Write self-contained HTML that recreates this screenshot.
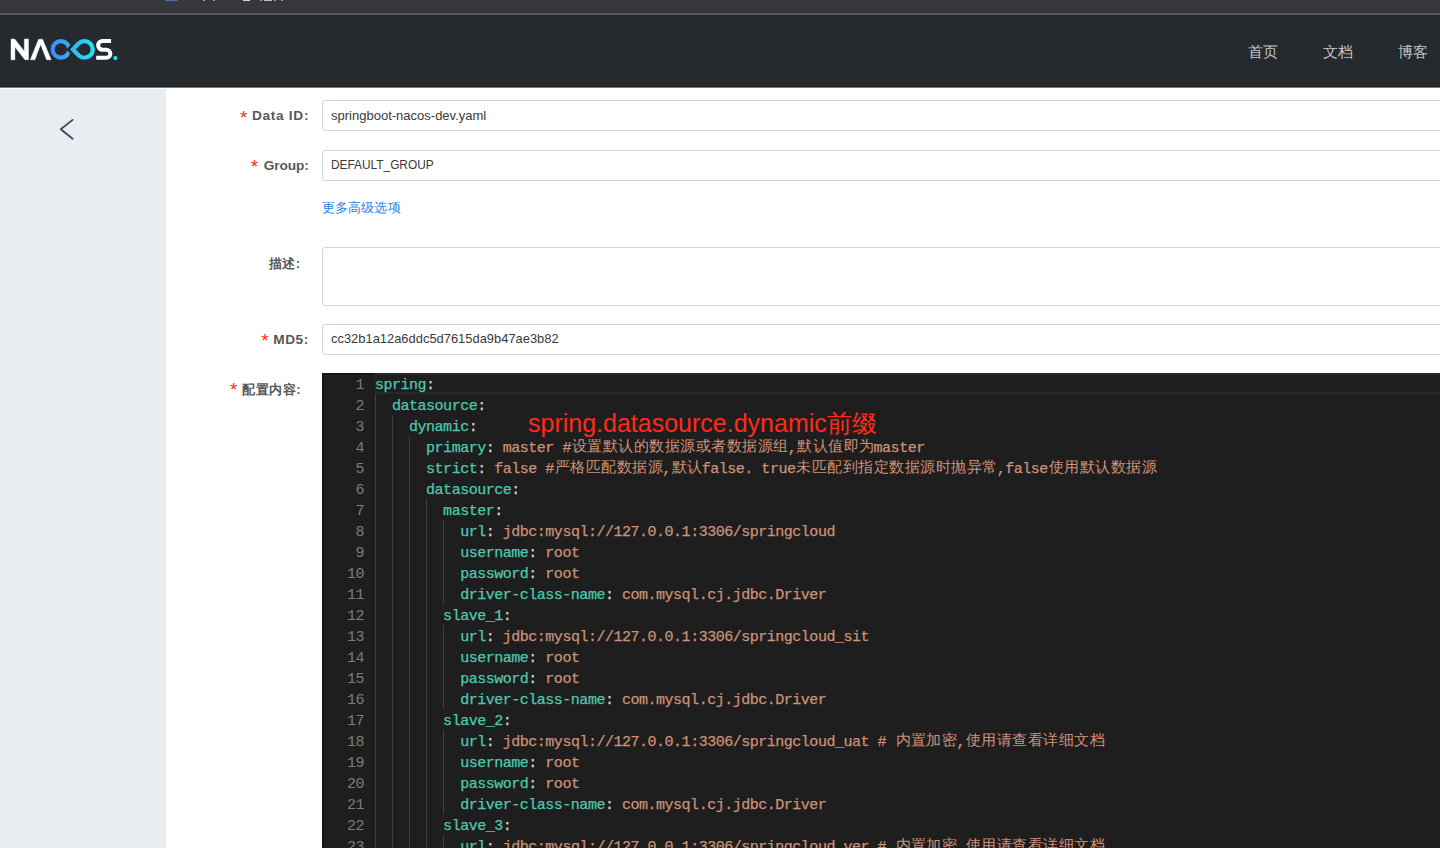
<!DOCTYPE html>
<html><head><meta charset="utf-8">
<style>
*{box-sizing:border-box}
html,body{margin:0;padding:0;width:1440px;height:848px;overflow:hidden;background:#fff;font-family:"Liberation Sans",sans-serif}
.a{position:absolute}
#top{left:0;top:0;width:1440px;height:13px;background:#37383c}
#topl1{left:0;top:12px;width:1440px;height:1px;background:#303135}
#topl2{left:0;top:13px;width:1440px;height:2px;background:#5b5c60}
#nav{left:0;top:15px;width:1440px;height:73px;background:#252a2e}
#navl0{left:0;top:15px;width:1440px;height:1px;background:#1f2229}
#navl1{left:0;top:86px;width:1440px;height:1px;background:#1b1f22}
#navl2{left:0;top:87px;width:1440px;height:1px;background:#777a7d}
#side{left:0;top:89px;width:166px;height:759px;background:#e9ecf1}
.nv{top:42px;font-size:15.4px;color:#c4c4c4;line-height:20px;white-space:nowrap}
.lbl{font-weight:bold;font-size:13.2px;color:#595959;text-align:right;white-space:nowrap;line-height:16px}
.star{color:#ff3000;font-size:19px;line-height:16px}
.inp{left:322px;width:1200px;height:31px;border:1px solid #d5d6de;border-radius:3px;background:#fff}
.itx{font-size:13.6px;color:#3a3a3a;white-space:nowrap;line-height:16px}

#ed{overflow:hidden;box-shadow:inset 2px 2px 0 #151515}
#ed .ln{position:absolute;left:0;width:42px;text-align:right;font-family:"Liberation Mono",monospace;font-size:15px;letter-spacing:-0.51px;line-height:21px;margin-top:2px;color:#7c7c7c;white-space:pre}
#ed .cl{position:absolute;font-family:"Liberation Mono",monospace;font-size:15px;letter-spacing:-0.485px;line-height:21px;margin-top:2px;color:#d4d4d4;white-space:pre;-webkit-text-stroke:0.25px}
#ed .k{color:#4ec9b0}
#ed .p{color:#d4d4d4}
#ed .v{color:#ce9178}
#ed i{font-style:normal;line-height:1px;font-family:"Liberation Sans",sans-serif;font-size:15.4px;letter-spacing:0.48px;-webkit-text-stroke:0;position:relative;left:1px;top:-0.8px}
#ed .g{position:absolute;width:1px;height:21px;background:#404040}
#ed .cur{position:absolute;left:53px;top:0;width:1100px;height:21px;border:2px solid #282828;border-right:none}
</style></head><body>
<div class="a" id="top"></div>
<div class="a" id="topl1"></div>
<div class="a" id="topl2"></div>
<div class="a" style="left:165px;top:0;width:13px;height:1px;background:#4a6da8"></div>
<div class="a" style="left:203px;top:0;width:2px;height:1px;background:#b09aa0"></div>
<div class="a" style="left:213px;top:0;width:2px;height:1px;background:#a09a70"></div>
<div class="a" style="left:243px;top:0;width:7px;height:1px;background:#d0d2e0"></div>
<div class="a" style="left:260px;top:0;width:2px;height:1px;background:#9a8a9a"></div>
<div class="a" style="left:264px;top:0;width:8px;height:1px;background:#b8bcc8"></div>
<div class="a" style="left:274px;top:0;width:2px;height:1px;background:#a0a0a0"></div>
<div class="a" style="left:281px;top:0;width:2px;height:1px;background:#a0a0a0"></div>
<div class="a" id="nav"></div>
<div class="a" id="navl0"></div>
<div class="a" id="navl1"></div>
<div class="a" id="navl2"></div>
<div class="a" id="side"></div>

<!-- logo -->
<svg class="a" style="left:0;top:0" width="130" height="70" viewBox="0 0 130 70">
<defs>
<linearGradient id="lg" x1="50" y1="0" x2="95" y2="0" gradientUnits="userSpaceOnUse"><stop offset="0" stop-color="#3d88f8"/><stop offset="0.45" stop-color="#34b4f6"/><stop offset="1" stop-color="#1de9f9"/></linearGradient>
<clipPath id="cc"><polygon points="40,20 95.5,20 66.1,49.4 95.5,78.8 40,78.8"/></clipPath>
</defs>
<polygon points="11,39 14.7,39 24.3,51.2 24.3,39 28.5,39 28.5,59.8 25,59.8 14.9,47 14.9,59.8 11,59.8" fill="#fff" stroke="#fff" stroke-width="0.4" stroke-linejoin="round"/>
<polygon points="30.3,59.8 38.6,39.2 42.6,39.2 51.2,59.8 46.6,59.8 40.6,44.4 34.9,59.8" fill="#fff" stroke="#fff" stroke-width="0.4" stroke-linejoin="round"/>
<circle cx="60.9" cy="49.4" r="8.3" fill="none" stroke="url(#lg)" stroke-width="4.2" clip-path="url(#cc)"/>
<path d="M78.5,43.5 A8.35,8.35 0 1 1 78.5,55.3 L72.85,49.4 Z" fill="none" stroke="url(#lg)" stroke-width="4.2" stroke-linejoin="miter"/>
<path d="M111.1,40.95 H102.55 A4.4,4.4 0 0 0 102.55,49.75 H106.3 A4.05,4.05 0 0 1 106.3,57.85 H96.2" fill="none" stroke="#fff" stroke-width="4"/>
<circle cx="115.35" cy="58.05" r="2.1" fill="#1ee6f8"/>
</svg>

<div class="a nv" style="left:1248px">首页</div>
<div class="a nv" style="left:1322.7px">文档</div>
<div class="a nv" style="left:1398.3px">博客</div>

<!-- sidebar arrow -->
<svg class="a" style="left:50px;top:110px" width="30" height="40" viewBox="0 0 30 40">
<path d="M22.6 9.9 L10.8 19.3 L22.6 28.8" fill="none" stroke="#394a5e" stroke-width="1.8" stroke-linecap="round" stroke-linejoin="round"/>
</svg>

<!-- form -->
<div class="a star" style="left:240px;top:109.8px">*</div>
<div class="a lbl" style="left:251.9px;top:108px;font-size:13.7px;letter-spacing:0.7px">Data ID:</div>
<div class="a inp" style="top:100px"></div>
<div class="a itx" style="left:331px;top:107.6px;transform:scaleX(0.957);transform-origin:0 0">springboot-nacos-dev.yaml</div>

<div class="a star" style="left:250.8px;top:158.9px">*</div>
<div class="a lbl" style="left:263.7px;top:157.8px;font-size:13.7px;letter-spacing:-0.12px">Group:</div>
<div class="a inp" style="top:150px"></div>
<div class="a itx" style="left:330.9px;top:157.1px;transform:scaleX(0.873);transform-origin:0 0">DEFAULT_GROUP</div>

<div class="a" style="left:321.6px;top:200.3px;font-size:13.2px;color:#2f7fd8;line-height:16px;letter-spacing:0.2px;white-space:nowrap">更多高级选项</div>

<div class="a lbl" style="left:269px;top:255.6px;letter-spacing:0.4px">描述:</div>
<div class="a inp" style="top:247px;height:59px"></div>

<div class="a star" style="left:261.25px;top:333px">*</div>
<div class="a lbl" style="left:273.2px;top:331.8px;font-size:13.7px;letter-spacing:0.55px">MD5:</div>
<div class="a inp" style="top:324px"></div>
<div class="a itx" style="left:330.7px;top:331.2px;transform:scaleX(0.95);transform-origin:0 0">cc32b1a12a6ddc5d7615da9b47ae3b82</div>

<div class="a star" style="left:230px;top:382.3px">*</div>
<div class="a lbl" style="left:242px;top:382px;letter-spacing:0.55px">配置内容:</div>

<div class="a" style="left:528px;top:408.4px;font-size:25px;line-height:30px;color:#ff2a1c;white-space:nowrap;z-index:5">spring.datasource.dynamic前缀</div>

<!-- editor -->
<div class="a" id="ed" style="left:322px;top:373px;width:1118px;height:475px;background:#1e1e1e">
<div class="cur"></div>
<b class="g" style="left:53px;top:21px"></b>
<b class="g" style="left:53px;top:42px"></b>
<b class="g" style="left:70px;top:42px"></b>
<b class="g" style="left:53px;top:63px"></b>
<b class="g" style="left:70px;top:63px"></b>
<b class="g" style="left:87px;top:63px"></b>
<b class="g" style="left:53px;top:84px"></b>
<b class="g" style="left:70px;top:84px"></b>
<b class="g" style="left:87px;top:84px"></b>
<b class="g" style="left:53px;top:105px"></b>
<b class="g" style="left:70px;top:105px"></b>
<b class="g" style="left:87px;top:105px"></b>
<b class="g" style="left:53px;top:126px"></b>
<b class="g" style="left:70px;top:126px"></b>
<b class="g" style="left:87px;top:126px"></b>
<b class="g" style="left:104px;top:126px"></b>
<b class="g" style="left:53px;top:147px"></b>
<b class="g" style="left:70px;top:147px"></b>
<b class="g" style="left:87px;top:147px"></b>
<b class="g" style="left:104px;top:147px"></b>
<b class="g" style="left:121px;top:147px"></b>
<b class="g" style="left:53px;top:168px"></b>
<b class="g" style="left:70px;top:168px"></b>
<b class="g" style="left:87px;top:168px"></b>
<b class="g" style="left:104px;top:168px"></b>
<b class="g" style="left:121px;top:168px"></b>
<b class="g" style="left:53px;top:189px"></b>
<b class="g" style="left:70px;top:189px"></b>
<b class="g" style="left:87px;top:189px"></b>
<b class="g" style="left:104px;top:189px"></b>
<b class="g" style="left:121px;top:189px"></b>
<b class="g" style="left:53px;top:210px"></b>
<b class="g" style="left:70px;top:210px"></b>
<b class="g" style="left:87px;top:210px"></b>
<b class="g" style="left:104px;top:210px"></b>
<b class="g" style="left:121px;top:210px"></b>
<b class="g" style="left:53px;top:231px"></b>
<b class="g" style="left:70px;top:231px"></b>
<b class="g" style="left:87px;top:231px"></b>
<b class="g" style="left:104px;top:231px"></b>
<b class="g" style="left:53px;top:252px"></b>
<b class="g" style="left:70px;top:252px"></b>
<b class="g" style="left:87px;top:252px"></b>
<b class="g" style="left:104px;top:252px"></b>
<b class="g" style="left:121px;top:252px"></b>
<b class="g" style="left:53px;top:273px"></b>
<b class="g" style="left:70px;top:273px"></b>
<b class="g" style="left:87px;top:273px"></b>
<b class="g" style="left:104px;top:273px"></b>
<b class="g" style="left:121px;top:273px"></b>
<b class="g" style="left:53px;top:294px"></b>
<b class="g" style="left:70px;top:294px"></b>
<b class="g" style="left:87px;top:294px"></b>
<b class="g" style="left:104px;top:294px"></b>
<b class="g" style="left:121px;top:294px"></b>
<b class="g" style="left:53px;top:315px"></b>
<b class="g" style="left:70px;top:315px"></b>
<b class="g" style="left:87px;top:315px"></b>
<b class="g" style="left:104px;top:315px"></b>
<b class="g" style="left:121px;top:315px"></b>
<b class="g" style="left:53px;top:336px"></b>
<b class="g" style="left:70px;top:336px"></b>
<b class="g" style="left:87px;top:336px"></b>
<b class="g" style="left:104px;top:336px"></b>
<b class="g" style="left:53px;top:357px"></b>
<b class="g" style="left:70px;top:357px"></b>
<b class="g" style="left:87px;top:357px"></b>
<b class="g" style="left:104px;top:357px"></b>
<b class="g" style="left:121px;top:357px"></b>
<b class="g" style="left:53px;top:378px"></b>
<b class="g" style="left:70px;top:378px"></b>
<b class="g" style="left:87px;top:378px"></b>
<b class="g" style="left:104px;top:378px"></b>
<b class="g" style="left:121px;top:378px"></b>
<b class="g" style="left:53px;top:399px"></b>
<b class="g" style="left:70px;top:399px"></b>
<b class="g" style="left:87px;top:399px"></b>
<b class="g" style="left:104px;top:399px"></b>
<b class="g" style="left:121px;top:399px"></b>
<b class="g" style="left:53px;top:420px"></b>
<b class="g" style="left:70px;top:420px"></b>
<b class="g" style="left:87px;top:420px"></b>
<b class="g" style="left:104px;top:420px"></b>
<b class="g" style="left:121px;top:420px"></b>
<b class="g" style="left:53px;top:441px"></b>
<b class="g" style="left:70px;top:441px"></b>
<b class="g" style="left:87px;top:441px"></b>
<b class="g" style="left:104px;top:441px"></b>
<b class="g" style="left:53px;top:462px"></b>
<b class="g" style="left:70px;top:462px"></b>
<b class="g" style="left:87px;top:462px"></b>
<b class="g" style="left:104px;top:462px"></b>
<b class="g" style="left:121px;top:462px"></b>
<div class="ln" style="top:0px">1</div>
<div class="cl" style="top:0px;left:53.00px"><span class="k">spring</span><span class="p">:</span></div>
<div class="ln" style="top:21px">2</div>
<div class="cl" style="top:21px;left:70.03px"><span class="k">datasource</span><span class="p">:</span></div>
<div class="ln" style="top:42px">3</div>
<div class="cl" style="top:42px;left:87.06px"><span class="k">dynamic</span><span class="p">:</span></div>
<div class="ln" style="top:63px">4</div>
<div class="cl" style="top:63px;left:104.09px"><span class="k">primary</span><span class="p">:</span> <span class="v">master #<i>设置默认的数据源或者数据源组</i>,<i>默认值即为</i>master</span></div>
<div class="ln" style="top:84px">5</div>
<div class="cl" style="top:84px;left:104.09px"><span class="k">strict</span><span class="p">:</span> <span class="v">false #<i>严格匹配数据源</i>,<i>默认</i>false. true<i>未匹配到指定数据源时抛异常</i>,false<i>使用默认数据源</i></span></div>
<div class="ln" style="top:105px">6</div>
<div class="cl" style="top:105px;left:104.09px"><span class="k">datasource</span><span class="p">:</span></div>
<div class="ln" style="top:126px">7</div>
<div class="cl" style="top:126px;left:121.12px"><span class="k">master</span><span class="p">:</span></div>
<div class="ln" style="top:147px">8</div>
<div class="cl" style="top:147px;left:138.15px"><span class="k">url</span><span class="p">:</span> <span class="v">jdbc:mysql://127.0.0.1:3306/springcloud</span></div>
<div class="ln" style="top:168px">9</div>
<div class="cl" style="top:168px;left:138.15px"><span class="k">username</span><span class="p">:</span> <span class="v">root</span></div>
<div class="ln" style="top:189px">10</div>
<div class="cl" style="top:189px;left:138.15px"><span class="k">password</span><span class="p">:</span> <span class="v">root</span></div>
<div class="ln" style="top:210px">11</div>
<div class="cl" style="top:210px;left:138.15px"><span class="k">driver-class-name</span><span class="p">:</span> <span class="v">com.mysql.cj.jdbc.Driver</span></div>
<div class="ln" style="top:231px">12</div>
<div class="cl" style="top:231px;left:121.12px"><span class="k">slave_1</span><span class="p">:</span></div>
<div class="ln" style="top:252px">13</div>
<div class="cl" style="top:252px;left:138.15px"><span class="k">url</span><span class="p">:</span> <span class="v">jdbc:mysql://127.0.0.1:3306/springcloud_sit</span></div>
<div class="ln" style="top:273px">14</div>
<div class="cl" style="top:273px;left:138.15px"><span class="k">username</span><span class="p">:</span> <span class="v">root</span></div>
<div class="ln" style="top:294px">15</div>
<div class="cl" style="top:294px;left:138.15px"><span class="k">password</span><span class="p">:</span> <span class="v">root</span></div>
<div class="ln" style="top:315px">16</div>
<div class="cl" style="top:315px;left:138.15px"><span class="k">driver-class-name</span><span class="p">:</span> <span class="v">com.mysql.cj.jdbc.Driver</span></div>
<div class="ln" style="top:336px">17</div>
<div class="cl" style="top:336px;left:121.12px"><span class="k">slave_2</span><span class="p">:</span></div>
<div class="ln" style="top:357px">18</div>
<div class="cl" style="top:357px;left:138.15px"><span class="k">url</span><span class="p">:</span> <span class="v">jdbc:mysql://127.0.0.1:3306/springcloud_uat # <i>内置加密</i>,<i>使用请查看详细文档</i></span></div>
<div class="ln" style="top:378px">19</div>
<div class="cl" style="top:378px;left:138.15px"><span class="k">username</span><span class="p">:</span> <span class="v">root</span></div>
<div class="ln" style="top:399px">20</div>
<div class="cl" style="top:399px;left:138.15px"><span class="k">password</span><span class="p">:</span> <span class="v">root</span></div>
<div class="ln" style="top:420px">21</div>
<div class="cl" style="top:420px;left:138.15px"><span class="k">driver-class-name</span><span class="p">:</span> <span class="v">com.mysql.cj.jdbc.Driver</span></div>
<div class="ln" style="top:441px">22</div>
<div class="cl" style="top:441px;left:121.12px"><span class="k">slave_3</span><span class="p">:</span></div>
<div class="ln" style="top:462px">23</div>
<div class="cl" style="top:462px;left:138.15px"><span class="k">url</span><span class="p">:</span> <span class="v">jdbc:mysql://127.0.0.1:3306/springcloud_ver # <i>内置加密</i>,<i>使用请查看详细文档</i></span></div>
</div>

</body></html>
